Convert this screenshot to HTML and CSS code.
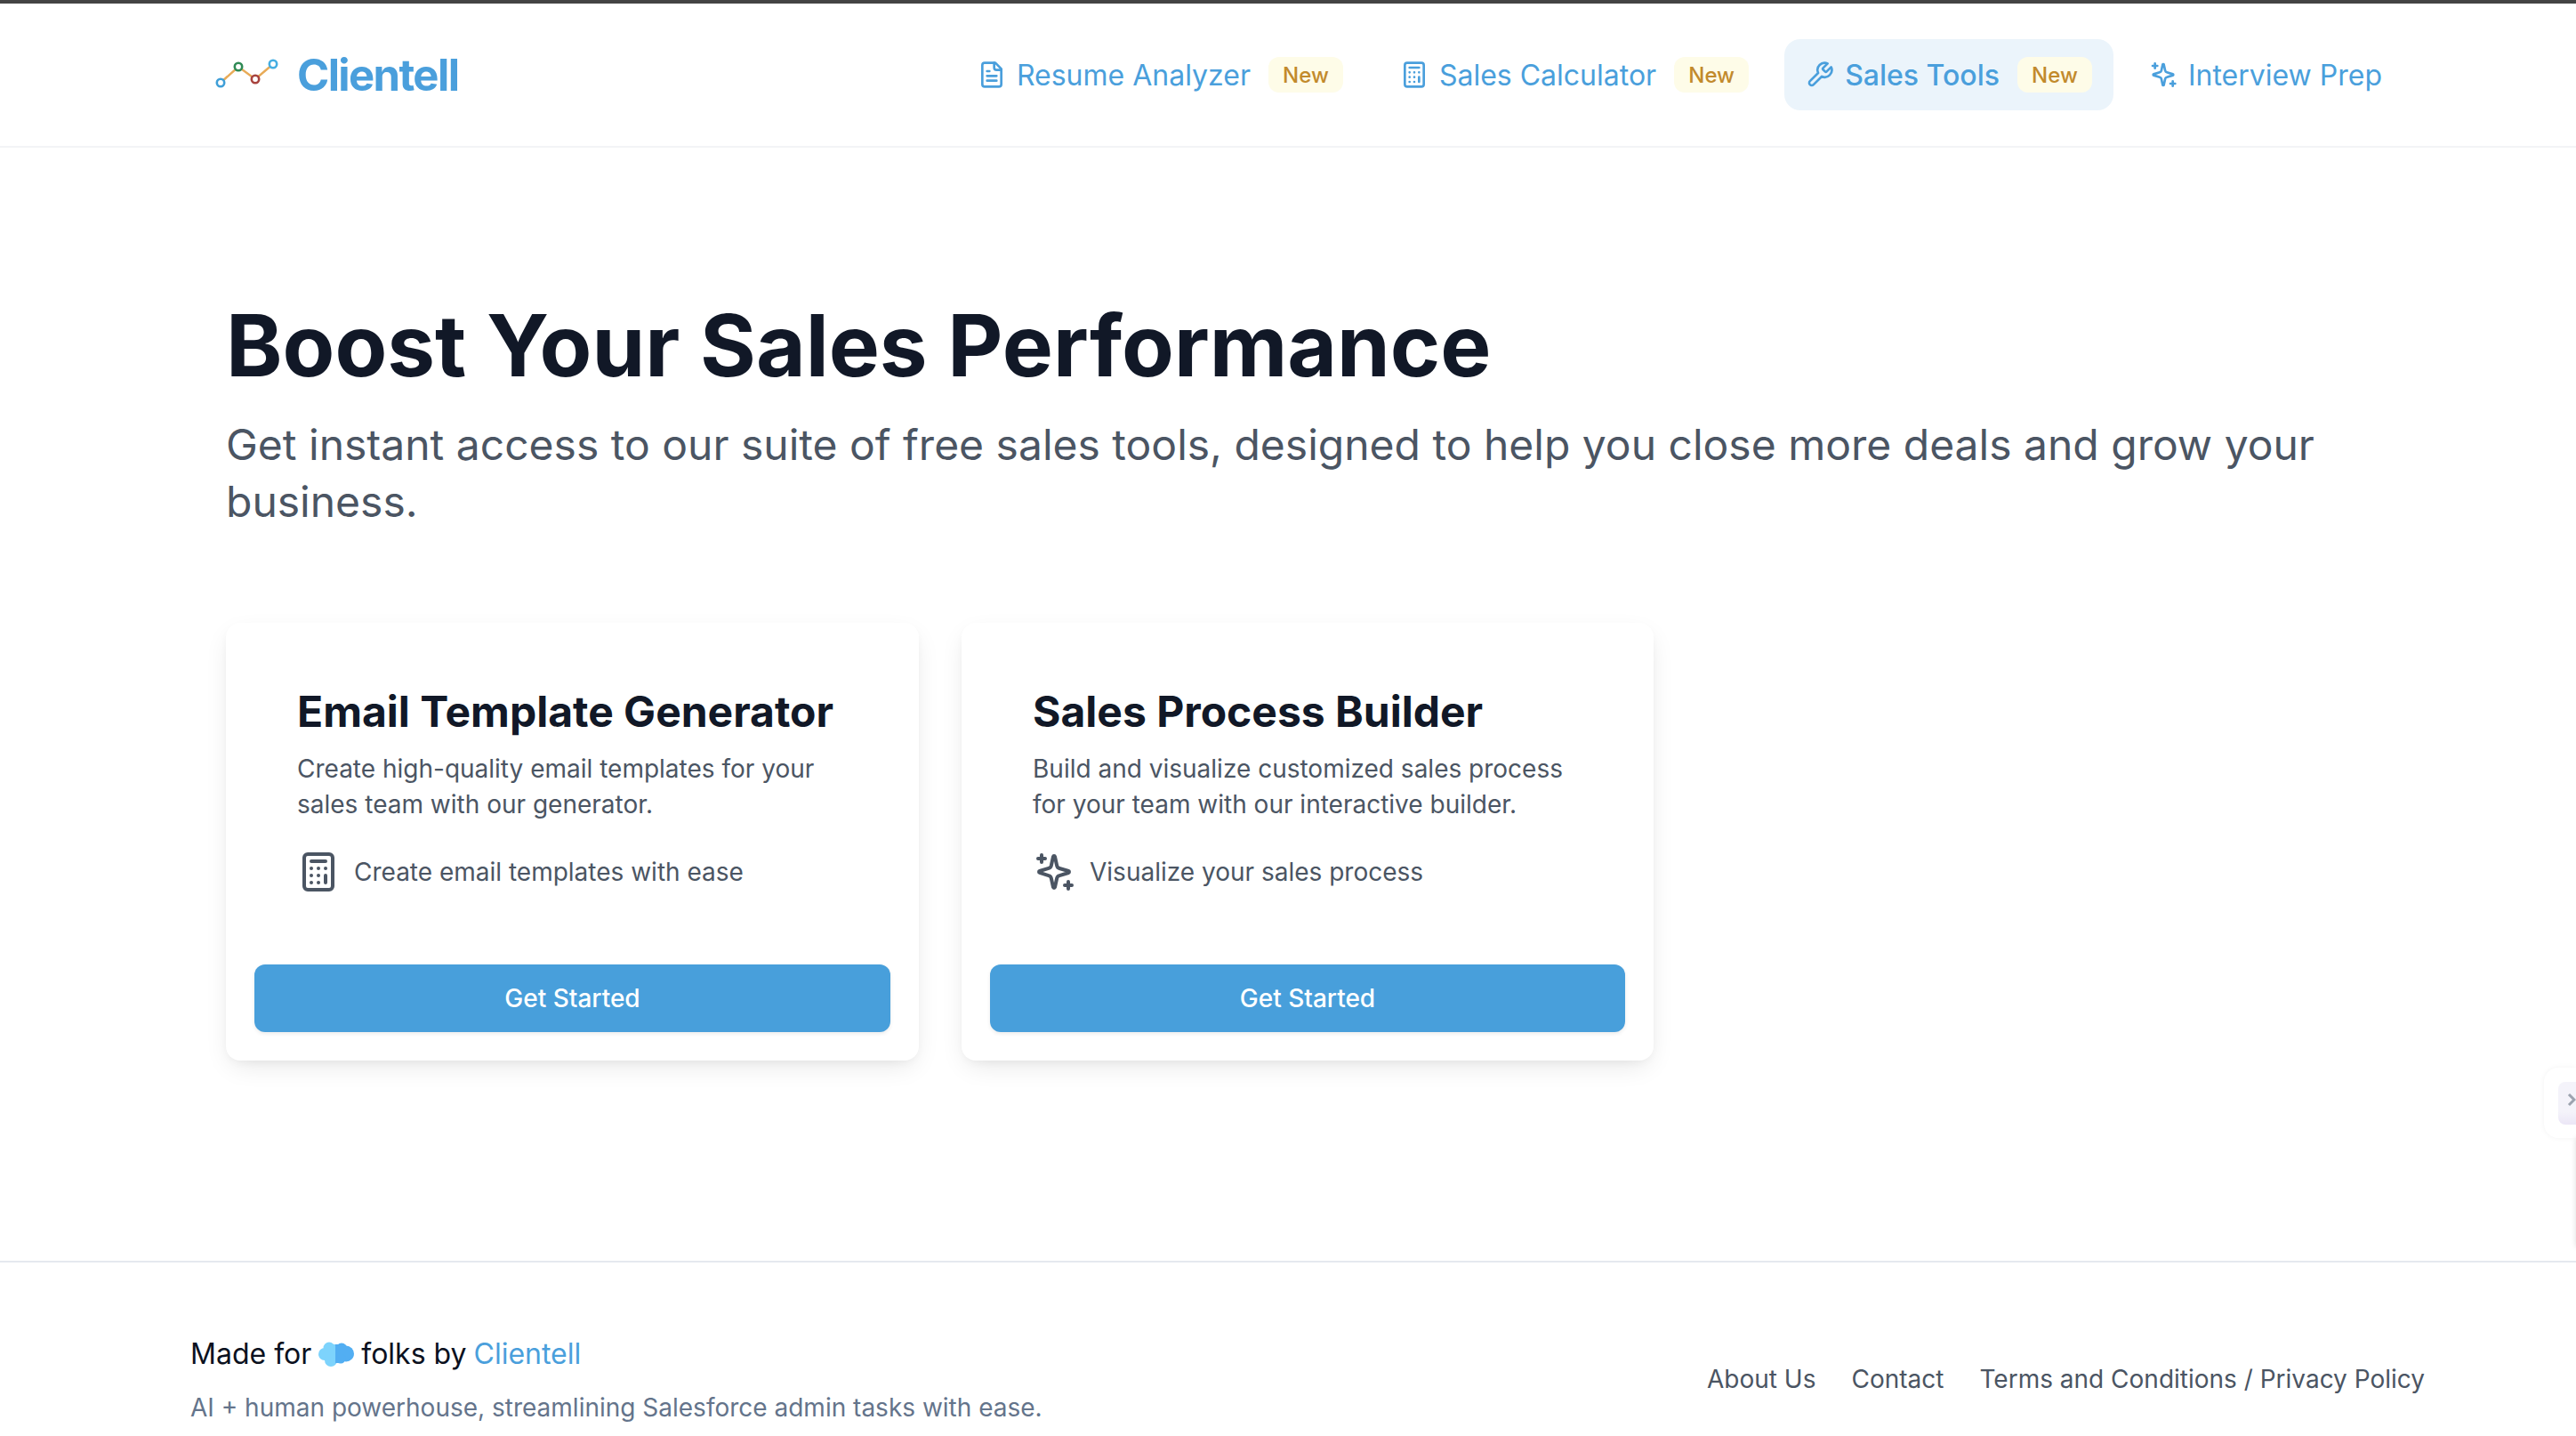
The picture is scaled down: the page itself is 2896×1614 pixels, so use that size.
FILE: index.html
```html
<!DOCTYPE html>
<html lang="en">
<head>
<meta charset="utf-8">
<title>Clientell Sales Tools</title>
<link rel="stylesheet" href="styles.css">
</head>
<body>
<header class="topbar">
  <a class="brand" href="#">
    <svg class="brand-mark" viewBox="0 0 84 40" fill="none">
      <path class="mark-line" d="M10 29 30 11 49 25 69 8"/>
      <circle class="mark-dot dot-blue" cx="10" cy="29" r="4.2"/>
      <circle class="mark-dot dot-green" cx="30" cy="11" r="4.2"/>
      <circle class="mark-dot dot-red" cx="49" cy="25" r="4.2"/>
      <circle class="mark-dot dot-sky" cx="69" cy="8" r="4.2"/>
    </svg>
    <span class="brand-name">Clientell</span>
  </a>
  <nav class="nav">
    <a class="nav-item" href="#">
      <svg class="nav-icon" viewBox="0 0 24 24"><path d="M15 2H6a2 2 0 0 0-2 2v16a2 2 0 0 0 2 2h12a2 2 0 0 0 2-2V7Z"/><path d="M14 2v4a2 2 0 0 0 2 2h4"/><path d="M10 9H8M16 13H8M16 17H8"/></svg>
      <span>Resume Analyzer</span><span class="badge">New</span>
    </a>
    <a class="nav-item" href="#">
      <svg class="nav-icon" viewBox="0 0 24 24"><rect x="4" y="2" width="16" height="20" rx="2"/><path d="M8 6h8M16 14v4M16 10h.01M12 10h.01M8 10h.01M12 14h.01M8 14h.01M12 18h.01M8 18h.01"/></svg>
      <span>Sales Calculator</span><span class="badge">New</span>
    </a>
    <a class="nav-item is-active" href="#">
      <svg class="nav-icon" viewBox="0 0 24 24"><path d="M14.7 6.3a1 1 0 0 0 0 1.4l1.6 1.6a1 1 0 0 0 1.4 0l3.77-3.77a6 6 0 0 1-7.94 7.94l-6.91 6.91a2.12 2.12 0 0 1-3-3l6.91-6.91a6 6 0 0 1 7.94-7.94l-3.76 3.76z"/></svg>
      <span>Sales Tools</span><span class="badge">New</span>
    </a>
    <a class="nav-item" href="#">
      <svg class="nav-icon" viewBox="0 0 24 24"><path d="M10.4 15.500a2 2 0 0 0-1.43-1.44l-5.1-1.58a.5.5 0 0 1 0-.96l5.1-1.58a2 2 0 0 0 1.43-1.44l1.12-5.13a.5.5 0 0 1 .96 0l1.12 5.13A2 2 0 0 0 15.030 10l5.1 1.52a.5.5 0 0 1 0 .96l-5.1 1.58a2 2 0 0 0-1.43 1.44l-1.12 5.13a.5.5 0 0 1-.96 0z"/><path d="M5 2.500v4M3 4.500h4M20 17.500v4M18 19.500h4"/></svg>
      <span>Interview Prep</span>
    </a>
  </nav>
</header>

<main class="main">
  <h1 class="title">Boost Your Sales Performance</h1>
  <p class="lead">Get instant access to our suite of free sales tools, designed to help you close more deals and grow your business.</p>
  <section class="cards">
    <article class="card">
      <div class="card-body">
        <h2 class="card-title">Email Template Generator</h2>
        <p class="card-text">Create high-quality email templates for your sales team with our generator.</p>
        <div class="feature">
          <svg class="feature-icon" viewBox="0 0 24 24"><rect x="4" y="2" width="16" height="20" rx="2"/><path d="M8 6h8M16 14v4M16 10h.01M12 10h.01M8 10h.01M12 14h.01M8 14h.01M12 18h.01M8 18h.01"/></svg>
          <span>Create email templates with ease</span>
        </div>
      </div>
      <a class="cta" href="#">Get Started</a>
    </article>
    <article class="card">
      <div class="card-body">
        <h2 class="card-title">Sales Process Builder</h2>
        <p class="card-text">Build and visualize customized sales process for your team with our interactive builder.</p>
        <div class="feature">
          <svg class="feature-icon" viewBox="0 0 24 24"><path d="M10.4 15.500a2 2 0 0 0-1.43-1.44l-5.1-1.58a.5.5 0 0 1 0-.96l5.1-1.58a2 2 0 0 0 1.43-1.44l1.12-5.13a.5.5 0 0 1 .96 0l1.12 5.13A2 2 0 0 0 15.030 10l5.1 1.52a.5.5 0 0 1 0 .96l-5.1 1.58a2 2 0 0 0-1.43 1.44l-1.12 5.13a.5.5 0 0 1-.96 0z"/><path d="M5 2.500v4M3 4.500h4M20 17.500v4M18 19.500h4"/></svg>
          <span>Visualize your sales process</span>
        </div>
      </div>
      <a class="cta" href="#">Get Started</a>
    </article>
  </section>
</main>

<footer class="footer">
  <div class="footer-left">
    <p class="made">Made for
      <svg class="cloud" viewBox="0 0 40 28">
        <g class="cloud-light"><circle cx="12" cy="7" r="6.500"/><circle cx="7" cy="14" r="7"/><circle cx="14" cy="21" r="7"/><rect x="8" y="3" width="12" height="21"/></g>
        <g class="cloud-dark"><circle cx="26" cy="8" r="6.500"/><circle cx="31" cy="13.500" r="9"/><circle cx="25" cy="19" r="5.500"/><rect x="19" y="3" width="8" height="21"/></g>
      </svg>
      folks by <a class="made-link" href="#">Clientell</a></p>
    <p class="tagline">AI + human powerhouse, streamlining Salesforce admin tasks with ease.</p>
  </div>
  <nav class="footer-links">
    <a href="#">About Us</a>
    <a href="#">Contact</a>
    <a href="#">Terms and Conditions / Privacy Policy</a>
  </nav>
</footer>

<aside class="side-tab"><span class="side-tab-inner"><svg viewBox="0 0 10 16"><path d="M2 2l6 6-6 6"/></svg></span></aside>
</body>
</html>
```

FILE: styles.css
```css
* { box-sizing: border-box; }
html, body { margin: 0; padding: 0; }
body {
  position: relative;
  height: 1614px;
  overflow: hidden;
  background: #fff;
  border-top: 4px solid #444;
  font-family: Inter, "Liberation Sans", sans-serif;
  color: #111827;
}
a { text-decoration: none; color: inherit; }
p, h1, h2 { margin: 0; }

.topbar {
  display: flex;
  align-items: center;
  justify-content: space-between;
  height: 162px;
  padding: 0 194px 0 238px;
  border-bottom: 2px solid #f3f4f6;
}
.brand { display: flex; align-items: center; gap: 12px; }
.brand-mark { width: 84px; height: 40px; }
.mark-line { stroke: #e8ab58; stroke-width: 2.5; }
.mark-dot { fill: #fff; stroke-width: 2.6; }
.dot-blue { stroke: #3f9fd8; }
.dot-green { stroke: #2f8a55; }
.dot-red { stroke: #a8433e; }
.dot-sky { stroke: #45aee2; }
.brand-name {
  font-size: 49px;
  font-weight: 700;
  letter-spacing: -1.6px;
  color: #4a9fdc;
}

.nav { display: flex; align-items: center; gap: 16px; }
.nav-item {
  display: flex;
  align-items: center;
  height: 80px;
  padding: 0 24px;
  border-radius: 18px;
  font-size: 32px;
  color: #4a9fdc;
}
.nav-item.is-active { background: #ebf4fb; font-weight: 500; }
.nav-icon {
  width: 32px;
  height: 32px;
  margin-right: 12px;
  fill: none;
  stroke: currentColor;
  stroke-width: 2;
  stroke-linecap: round;
  stroke-linejoin: round;
  flex: none;
}
.badge {
  display: flex;
  align-items: center;
  justify-content: center;
  width: 84px;
  height: 40px;
  margin-left: 20px;
  border-radius: 12px;
  background: #fefce8;
  color: #c28a2c;
  font-size: 24px;
  font-weight: 500;
}

.main { height: 1251px; padding: 164px 0 0 254px; }
.title {
  font-size: 96px;
  line-height: 116px;
  font-weight: 700;
  color: #111827;
}
.lead {
  width: 2433px;
  margin-top: 22px;
  font-size: 48px;
  line-height: 64px;
  color: #4b5563;
}
.cards {
  display: grid;
  grid-template-columns: 779px 778px 778px;
  gap: 48px;
  margin-top: 104px;
}
.card {
  display: flex;
  flex-direction: column;
  height: 492px;
  padding: 0 32px 32px;
  border-radius: 16px;
  background: #fff;
  box-shadow: 0 10px 30px -6px rgba(0, 0, 0, .11), 0 4px 12px -4px rgba(0, 0, 0, .06);
}
.card-body { flex: 1; padding: 70px 48px 0; }
.card-title {
  font-size: 48px;
  line-height: 60px;
  font-weight: 700;
  color: #111827;
}
.card-text {
  margin-top: 14px;
  font-size: 28px;
  line-height: 40px;
  color: #4b5563;
}
.feature {
  display: flex;
  align-items: center;
  gap: 16px;
  margin-top: 32px;
  font-size: 28px;
  color: #4b5563;
}
.feature-icon {
  width: 48px;
  height: 48px;
  fill: none;
  stroke: currentColor;
  stroke-width: 2;
  stroke-linecap: round;
  stroke-linejoin: round;
  flex: none;
}
.cta {
  display: flex;
  align-items: center;
  justify-content: center;
  height: 76px;
  border-radius: 12px;
  background: #489fdb;
  color: #fff;
  font-size: 28px;
  font-weight: 500;
  box-shadow: 0 2px 4px rgba(0, 0, 0, .08);
}

.footer {
  display: flex;
  align-items: center;
  justify-content: space-between;
  height: 197px;
  padding: 66px 170px 0 214px;
  border-top: 2px solid #e5e9ef;
}
.footer-left { padding-top: 2px; }
.made {
  display: flex;
  align-items: center;
  gap: 8px;
  font-size: 32px;
  line-height: 44px;
  color: #0b1120;
}
.cloud { width: 40px; height: 28px; }
.cloud-light { fill: #7dd3fc; }
.cloud-dark { fill: #52aef2; }
.made-link { color: #4a9fdc; }
.tagline {
  margin-top: 18px;
  font-size: 28px;
  line-height: 40px;
  color: #64748b;
}
.footer-links {
  display: flex;
  gap: 40px;
  font-size: 28px;
  color: #4b5563;
}

.side-tab {
  position: absolute;
  top: 1196px;
  right: 0;
  width: 36px;
  height: 79px;
  padding: 16px 0 0 16px;
  border-radius: 16px 0 0 16px;
  background: #fff;
  box-shadow: 0 0 6px rgba(0, 0, 0, .05);
}
.side-tab::after {
  content: "";
  position: absolute;
  top: 79px;
  right: -20px;
  width: 20px;
  height: 122px;
  box-shadow: 0 0 6px rgba(0, 0, 0, .14);
}
.side-tab-inner {
  display: block;
  height: 48px;
  padding: 12px 0 0 10px;
  border-radius: 8px 0 0 8px;
  background: linear-gradient(#f4f3fa 70%, #ebe6f6);
}
.side-tab-inner svg {
  display: block;
  width: 10px;
  height: 16px;
  fill: none;
  stroke: #9ca3af;
  stroke-width: 3;
}
```
